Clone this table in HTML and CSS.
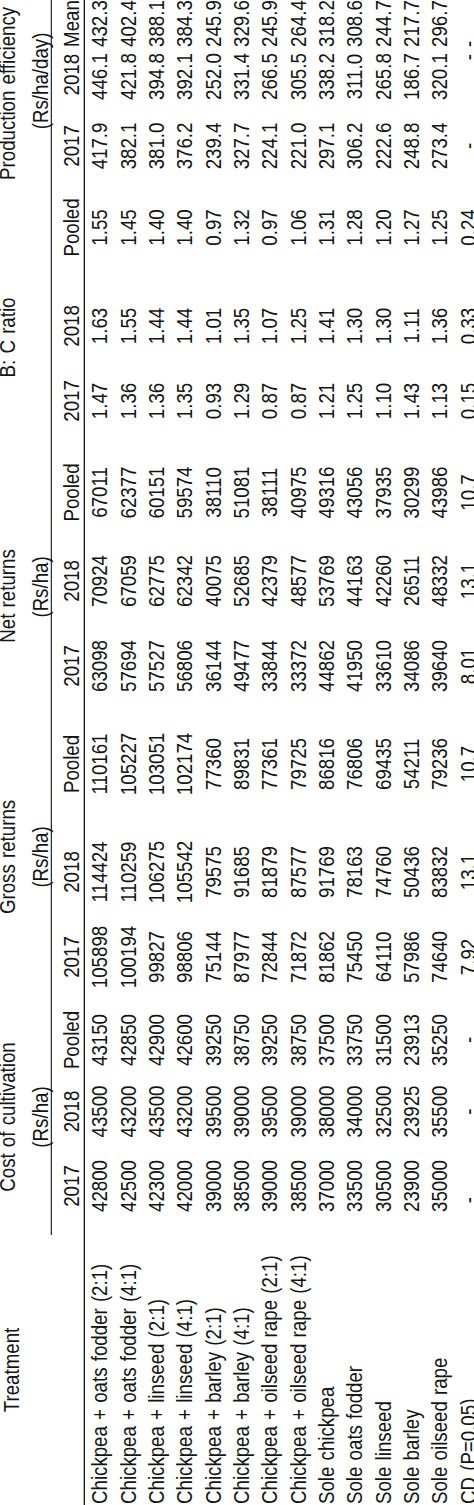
FILE: index.html
```html
<!DOCTYPE html>
<html lang="en">
<head>
<meta charset="utf-8">
<title>Economics of chickpea based intercropping</title>
<link rel="stylesheet" href="styles.css">
</head>
<body>
<div class="page">
  <div class="rot">
    <table class="econ">
      <colgroup>
        <col class="w-treat">
        <col class="w87"><col class="w73"><col class="w76">
        <col class="w84"><col class="w97"><col class="w103">
        <col class="w91"><col class="w86"><col class="w91">
        <col class="w84"><col class="w88"><col class="w95">
        <col class="w80"><col class="w52"><col class="w66">
      </colgroup>
      <thead>
        <tr class="grp">
          <th rowspan="2" class="treat">Treatment</th>
          <th colspan="3" class="g g-cost"><div class="t1">Cost of cultivation</div><div class="t2">(Rs/ha)</div></th>
          <th colspan="3" class="g g-gross"><div class="t1">Gross returns</div><div class="t2">(Rs/ha)</div></th>
          <th colspan="3" class="g g-net"><div class="t1">Net returns</div><div class="t2">(Rs/ha)</div></th>
          <th colspan="3" class="g g-bc"><div class="t1">B: C ratio</div><div class="t2">&nbsp;</div></th>
          <th colspan="3" class="g g-pe"><div class="t1">Production efficiency</div><div class="t2">(Rs/ha/day)</div></th>
        </tr>
        <tr class="yr">
          <th>2017</th><th>2018</th><th>Pooled</th>
          <th>2017</th><th>2018</th><th>Pooled</th>
          <th>2017</th><th>2018</th><th>Pooled</th>
          <th>2017</th><th>2018</th><th>Pooled</th>
          <th>2017</th><th>2018</th><th>Mean</th>
        </tr>
      </thead>
      <tbody>
        <tr><td>Chickpea + oats fodder (2:1)</td><td>42800</td><td>43500</td><td>43150</td><td>105898</td><td>114424</td><td>110161</td><td>63098</td><td>70924</td><td>67011</td><td>1.47</td><td>1.63</td><td>1.55</td><td>417.9</td><td>446.1</td><td>432.3</td></tr>
        <tr><td>Chickpea + oats fodder (4:1)</td><td>42500</td><td>43200</td><td>42850</td><td>100194</td><td>110259</td><td>105227</td><td>57694</td><td>67059</td><td>62377</td><td>1.36</td><td>1.55</td><td>1.45</td><td>382.1</td><td>421.8</td><td>402.4</td></tr>
        <tr><td>Chickpea + linseed (2:1)</td><td>42300</td><td>43500</td><td>42900</td><td>99827</td><td>106275</td><td>103051</td><td>57527</td><td>62775</td><td>60151</td><td>1.36</td><td>1.44</td><td>1.40</td><td>381.0</td><td>394.8</td><td>388.1</td></tr>
        <tr><td>Chickpea + linseed (4:1)</td><td>42000</td><td>43200</td><td>42600</td><td>98806</td><td>105542</td><td>102174</td><td>56806</td><td>62342</td><td>59574</td><td>1.35</td><td>1.44</td><td>1.40</td><td>376.2</td><td>392.1</td><td>384.3</td></tr>
        <tr><td>Chickpea + barley (2:1)</td><td>39000</td><td>39500</td><td>39250</td><td>75144</td><td>79575</td><td>77360</td><td>36144</td><td>40075</td><td>38110</td><td>0.93</td><td>1.01</td><td>0.97</td><td>239.4</td><td>252.0</td><td>245.9</td></tr>
        <tr><td>Chickpea + barley (4:1)</td><td>38500</td><td>39000</td><td>38750</td><td>87977</td><td>91685</td><td>89831</td><td>49477</td><td>52685</td><td>51081</td><td>1.29</td><td>1.35</td><td>1.32</td><td>327.7</td><td>331.4</td><td>329.6</td></tr>
        <tr><td>Chickpea + oilseed rape (2:1)</td><td>39000</td><td>39500</td><td>39250</td><td>72844</td><td>81879</td><td>77361</td><td>33844</td><td>42379</td><td>38111</td><td>0.87</td><td>1.07</td><td>0.97</td><td>224.1</td><td>266.5</td><td>245.9</td></tr>
        <tr><td>Chickpea + oilseed rape (4:1)</td><td>38500</td><td>39000</td><td>38750</td><td>71872</td><td>87577</td><td>79725</td><td>33372</td><td>48577</td><td>40975</td><td>0.87</td><td>1.25</td><td>1.06</td><td>221.0</td><td>305.5</td><td>264.4</td></tr>
        <tr><td>Sole chickpea</td><td>37000</td><td>38000</td><td>37500</td><td>81862</td><td>91769</td><td>86816</td><td>44862</td><td>53769</td><td>49316</td><td>1.21</td><td>1.41</td><td>1.31</td><td>297.1</td><td>338.2</td><td>318.2</td></tr>
        <tr><td>Sole oats fodder</td><td>33500</td><td>34000</td><td>33750</td><td>75450</td><td>78163</td><td>76806</td><td>41950</td><td>44163</td><td>43056</td><td>1.25</td><td>1.30</td><td>1.28</td><td>306.2</td><td>311.0</td><td>308.6</td></tr>
        <tr><td>Sole linseed</td><td>30500</td><td>32500</td><td>31500</td><td>64110</td><td>74760</td><td>69435</td><td>33610</td><td>42260</td><td>37935</td><td>1.10</td><td>1.30</td><td>1.20</td><td>222.6</td><td>265.8</td><td>244.7</td></tr>
        <tr><td>Sole barley</td><td>23900</td><td>23925</td><td>23913</td><td>57986</td><td>50436</td><td>54211</td><td>34086</td><td>26511</td><td>30299</td><td>1.43</td><td>1.11</td><td>1.27</td><td>248.8</td><td>186.7</td><td>217.7</td></tr>
        <tr><td>Sole oilseed rape</td><td>35000</td><td>35500</td><td>35250</td><td>74640</td><td>83832</td><td>79236</td><td>39640</td><td>48332</td><td>43986</td><td>1.13</td><td>1.36</td><td>1.25</td><td>273.4</td><td>320.1</td><td>296.7</td></tr>
        <tr><td>CD (P=0.05)</td><td class="dash1">-</td><td>-</td><td>-</td><td>7.92</td><td>13.1</td><td>10.7</td><td>8.01</td><td>13.1</td><td>10.7</td><td>0.15</td><td>0.33</td><td>0.24</td><td>-</td><td>-</td><td>-</td></tr>
      </tbody>
    </table>
  </div>
</div>
</body>
</html>
```

FILE: styles.css
```css
html, body {
  margin: 0;
  padding: 0;
  background: #ffffff;
  overflow: hidden;
}

.page {
  width: 474px;
  height: 1505px;
  overflow: hidden;
  background: #ffffff;
}

/* the table is typeset landscape and turned a quarter turn counter-clockwise */
.rot {
  width: 1523px;
  transform-origin: 0 0;
  transform: translate(0, 1505px) rotate(-90deg) scale(1, 1.18);
}

.econ {
  width: 1523px;
  table-layout: fixed;
  border-collapse: collapse;
  font-family: "Liberation Sans", Arial, Helvetica, sans-serif;
  font-size: 18.7px;
  word-spacing: 1px;
  color: #141414;
}

.w-treat { width: 270px; }
.w52 { width: 52px; }
.w66 { width: 66px; }
.w73 { width: 73px; }
.w76 { width: 76px; }
.w80 { width: 80px; }
.w84 { width: 84px; }
.w86 { width: 86px; }
.w87 { width: 87px; }
.w88 { width: 88px; }
.w91 { width: 91px; }
.w95 { width: 95px; }
.w97 { width: 97px; }
.w103 { width: 103px; }

.econ th,
.econ td {
  padding: 0;
  font-weight: normal;
  white-space: nowrap;
  text-align: center;
}

/* group headings */
.grp .g {
  vertical-align: top;
  border-bottom: 1px solid #222;
}
.grp .t1 {
  line-height: 12px;
  padding-top: 1px;
}
.grp .t2 {
  line-height: 16px;
  margin-top: 14.2px;
}
.g-net .t1 { padding-right: 30px; }
.g-net .t2 { padding-right: 12px; }
.g-bc .t1 { padding-right: 48px; }
.g-pe { padding-right: 14px; }
.g-pe .t1 { padding-right: 30px; }

.treat {
  vertical-align: top;
  text-align: left;
  padding-top: 20.5px;
  padding-left: 1px;
  line-height: 20px;
  border-bottom: 1px solid #222;
}

.yr th {
  padding-top: 6.5px;
  line-height: 20px;
  border-bottom: 1px solid #222;
}

.econ td {
  line-height: 24px;
}
.econ tbody td:first-child {
  text-align: left;
  padding-left: 1px;
}
.econ tbody tr:first-child td {
  padding-top: 1.3px;
}

/* fine placement of the figures inside each column */
.econ tbody td:nth-child(2),  .yr th:nth-child(1)  { padding-left: 11px; }
.econ tbody td:nth-child(4),  .yr th:nth-child(3)  { padding-right: 6px; }
.econ tbody td:nth-child(6),  .yr th:nth-child(5)  { padding-right: 11px; }
.econ tbody td:nth-child(7),  .yr th:nth-child(6)  { padding-left: 5px; }
.econ tbody td:nth-child(8),  .yr th:nth-child(7)  { padding-left: 7px; }
.econ tbody td:nth-child(11), .yr th:nth-child(10) { padding-left: 8px; }
.econ tbody td:nth-child(12), .yr th:nth-child(11) { padding-right: 14px; }
.econ tbody td:nth-child(14), .yr th:nth-child(13) { padding-right: 12px; }
.econ tbody td:nth-child(15), .yr th:nth-child(14) { text-align: right; padding-right: 6px; }
.econ tbody td:nth-child(16), .yr th:nth-child(15) { text-align: left; padding-left: 1px; }

.econ tbody td.dash1 { padding-left: 0; padding-right: 17px; }
```
